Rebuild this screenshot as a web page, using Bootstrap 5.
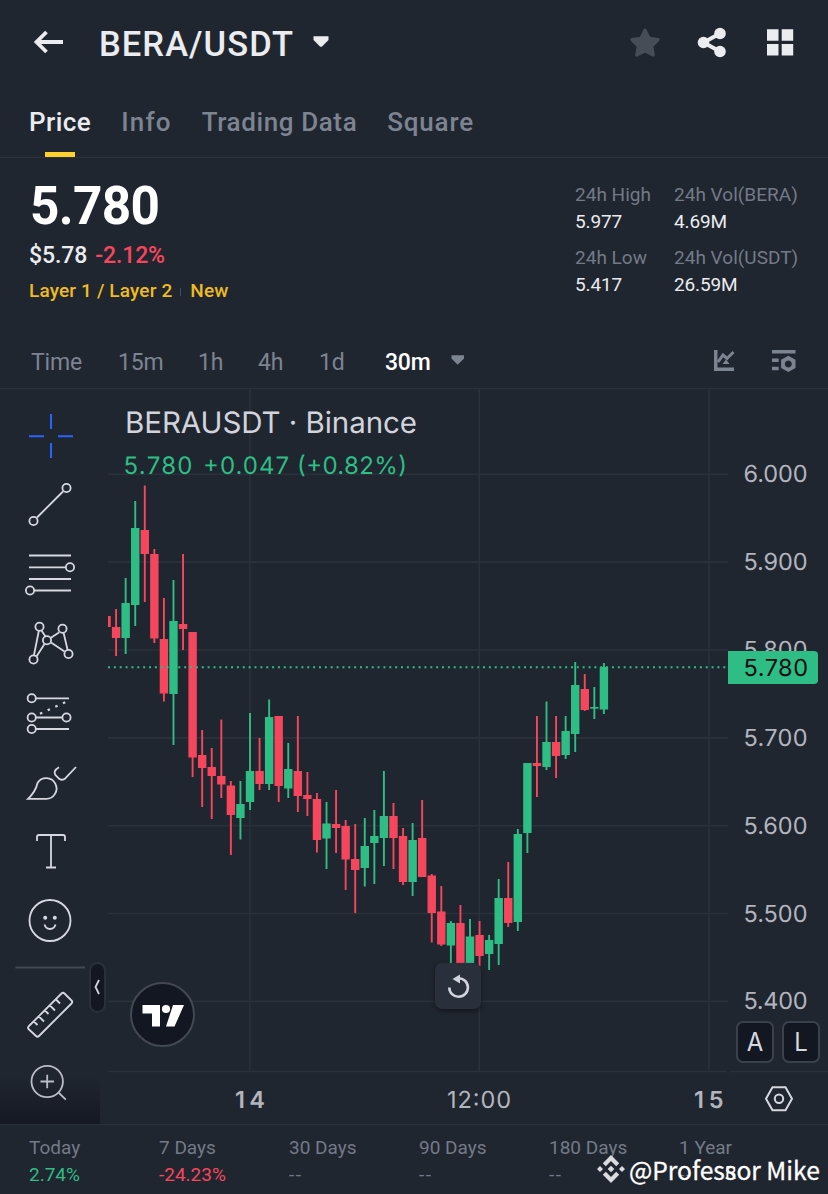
<!DOCTYPE html>
<html lang="en">
<head>
<meta charset="utf-8">
<meta name="viewport" content="width=device-width, initial-scale=1">
<title>BERA/USDT</title>
<link href="https://cdn.jsdelivr.net/npm/bootstrap@5.3.0/dist/css/bootstrap.min.css" rel="stylesheet">
<style>
:root{--bg:#20262f;--line:#2b313a;--fg:#eaecef;--dim:#7d8491;--up:#2ebd85;--down:#f6465d;--gold:#eebb22}
body{background:var(--bg);color:var(--fg);font-family:Roboto,sans-serif;width:828px;height:1194px;overflow:hidden}
svg{display:block;flex:none}
.topbar{height:84px}
.pair{font-size:34.5px;font-weight:500;line-height:40px;letter-spacing:1.05px;margin-left:35px;margin-top:3px}
.tabs{height:74px;border-bottom:1px solid var(--line);padding-left:29px;gap:30px}
.tabs a{position:relative;color:var(--dim);text-decoration:none;font-size:26px;font-weight:500;line-height:77px;letter-spacing:.45px}
.tabs a.on{color:var(--fg)}
.tabs .t2{letter-spacing:1.2px}
.tabs .t3{letter-spacing:.6px}
.tabs .t4{letter-spacing:.8px}
.tabs a.on::after{content:"";position:absolute;left:16px;bottom:0;width:30px;height:5px;background:#fcd12f}
.quote{height:176px;padding:0 29px}
.last{font-size:54px;font-weight:700;line-height:54px;letter-spacing:-.7px;color:#fff;margin:21px 0 0 1px;transform:scaleX(.95);transform-origin:left}
.sub{font-size:23px;font-weight:500;line-height:26px;margin-top:10px;letter-spacing:-.1px}
.tags{font-size:19px;font-weight:500;line-height:24px;color:var(--gold);margin-top:10px;letter-spacing:.15px}
.tags i{width:1px;height:8px;background:#474d57;margin:2px 9px 0 8px}
.stats{font-size:19px;line-height:27px;margin-top:23px}
.stats dt{font-weight:400;color:#737a87;line-height:27px;letter-spacing:.02px}
.stats dd{margin:0 0 9px;line-height:27px;color:var(--fg);letter-spacing:-.15px}
.stats .c1{width:99px}.stats .c2{width:125px;white-space:nowrap}
.frames{height:55px;border-bottom:1px solid var(--line);padding-left:31px;font-size:23px;color:var(--dim)}
.frames span{line-height:57px;white-space:nowrap;letter-spacing:-.2px}
.chart{height:736px;border-bottom:1px solid var(--line)}
.tools{width:100px;padding-top:12px;position:relative;height:735px}
.tools svg{fill:none;stroke:#d6d8e0;stroke-width:1.8;position:relative}
.fade-foot{position:absolute;left:0;bottom:0;width:100px;height:48px;background:linear-gradient(rgba(19,23,34,0),rgba(19,23,34,.9))}
.plot{position:relative;width:728px}
.plot text{font-family:Inter,sans-serif}
.handle{position:absolute;left:-11px;top:573px;width:17px;height:51px;border:2px solid #2a303b;border-radius:9px;background:#131722}
.tv{position:absolute;left:30px;top:593px;width:65px;height:65px;border:2px solid #434852;border-radius:50%;background:#131722}
.reset{position:absolute;left:335px;top:574px;width:46px;height:46px;border-radius:7px;background:#2a303b;box-shadow:0 2px 5px rgba(0,0,0,.4)}
.scalebtns{position:absolute;right:8px;top:632px;gap:8px}
.scalebtns button{width:38px;height:42px;padding:0;border:2px solid #3b414c;border-radius:7px;background:#131722;color:#d6d8e0;font:400 26px/36px Inter,sans-serif}
.scalebtns span{display:block;transform:scaleX(.92)}
.perf{height:69px;padding-left:29px;font-size:19px;position:relative}
.perf div.cell{width:130px;padding-top:9px;line-height:27px;color:#737a87;white-space:nowrap}
.dash{letter-spacing:1.4px}
.up{color:var(--up)}.down{color:var(--down);}
.credit{position:absolute;left:597px;top:26px;height:36px;color:#fff;font:400 24.6px/36px "Noto Sans CJK SC",sans-serif;-webkit-text-stroke:.3px #fff;white-space:nowrap}
.credit span{margin-top:-1px}
.stray{position:absolute;left:725px;top:38px;font-size:18px;line-height:20px;color:#fff}
</style>
</head>
<body>
<header class="topbar d-flex align-items-center">
  <svg width="64" height="84" viewBox="0 0 64 84" fill="none" stroke="#eaecef" stroke-width="3.8"><path d="M63 42H37M46.500 32L36.500 42l10 10"/></svg>
  <div class="pair">BERA/USDT</div>
  <svg width="20" height="84" viewBox="311 0 20 84" class="ms-auto"><path d="M313.500 36.300h15v3.700l-6.200 6.300q-1.300 1-2.600 0L313.500 40z" fill="#eaecef"/></svg>
  <svg width="497" height="84" viewBox="331 0 497 84">
    <path d="M645 30l4.200 8.200 9 1.400-6.400 6.600 1.500 8.900-8.300-4.100-8.300 4.100 1.500-8.900-6.400-6.600 9-1.400z" fill="#474d57" stroke="#474d57" stroke-width="3" stroke-linejoin="round"/>
    <g fill="#eaecef"><circle cx="703.500" cy="42.500" r="5.800"/><circle cx="720" cy="33.500" r="5.800"/><circle cx="720" cy="51.500" r="5.800"/><path d="M720 33.500L703.500 42.500 720 51.500" fill="none" stroke="#eaecef" stroke-width="4"/>
    <path d="M767 29.300h11.500v11.500H767zM781.700 29.300h11.500v11.500h-11.500zM767 44.100h11.500v11.500H767zM781.700 44.100h11.500v11.500h-11.500z"/></g>
  </svg>
</header>
<nav class="tabs d-flex">
  <a class="on" href="#">Price</a><a class="t2" href="#">Info</a><a class="t3" href="#">Trading Data</a><a class="t4" href="#">Square</a>
</nav>
<section class="quote d-flex justify-content-between">
  <div>
    <div class="last">5.780</div>
    <div class="sub"><span>$5.78</span><span class="down ms-2">-2.12%</span></div>
    <div class="tags d-flex align-items-center"><span>Layer 1 / Layer 2</span><i></i><span>New</span></div>
  </div>
  <div class="stats d-flex">
    <dl class="c1 mb-0"><dt>24h High</dt><dd>5.977</dd><dt>24h Low</dt><dd>5.417</dd></dl>
    <dl class="c2 mb-0"><dt>24h Vol(BERA)</dt><dd>4.69M</dd><dt>24h Vol(USDT)</dt><dd>26.59M</dd></dl>
  </div>
</section>
<div class="frames d-flex">
  <span style="width:87px">Time</span><span style="width:80px">15m</span><span style="width:60px">1h</span><span style="width:61px">4h</span><span style="width:66px">1d</span><span style="width:66px;color:#fff;font-weight:500">30m</span>
  <svg width="377" height="54" viewBox="451 334 377 54" fill="#7d8491">
    <path d="M451.500 355.300h12.500v3.200l-6.300 6.200-6.200-6.200z"/>
    <path d="M714 350h3.500v17.500H734v3.500h-20z"/><path d="M718 362l5-7 4 3.500 6.500-6.500" fill="none" stroke="#7d8491" stroke-width="3"/><path d="M726 359.500l3.500 4.500h-7z"/>
    <path d="M772 350h23.500v3.600H772zM772 358.500h6.700v3.600H772zM772 366.700h6.700v3.600H772z"/><path fill-rule="evenodd" d="M788.300 355.700l7.200 4.100v8.200l-7.200 4.100-7.200-4.100v-8.200zm0 4.700a3.500 3.500 0 1 0 .01 0z"/>
  </svg>
</div>
<main class="chart d-flex">
  <aside class="tools">
    <div class="fade-foot"></div>
    <svg width="100" height="69" viewBox="0 401 100 69"><path stroke="#2962ff" stroke-width="2" d="M51 414v15M51 443v15M29 436.300h15M58 436.300h15"/></svg>
    <svg width="100" height="69" viewBox="0 470 100 69"><path d="M37 517.500L63 491.500"/><circle cx="33.500" cy="521" r="4.100"/><circle cx="66.500" cy="488" r="4.100"/></svg>
    <svg width="100" height="69" viewBox="0 539 100 69"><path d="M29 555.500h42M29 567.300h37M29 579h42M34 590.500h37"/><circle cx="70" cy="567.300" r="4.100"/><circle cx="30" cy="590.500" r="4.100"/></svg>
    <svg width="100" height="69" viewBox="0 608 100 69"><path d="M38.800 631L34 655M41.500 630.500l4 6M50.500 638l8.500-5.500M63.500 632.500l4 17M51 642.500l13.500 9M36.500 656.500l8-12.500"/><circle cx="39.500" cy="626.700" r="4.100"/><circle cx="62.500" cy="628.700" r="4.100"/><circle cx="47" cy="640.300" r="4.100"/><circle cx="33.500" cy="659.500" r="4.100"/><circle cx="68.500" cy="654" r="4.100"/></svg>
    <svg width="100" height="69" viewBox="0 677 100 69"><path d="M36 698.300h33M36 717.500h26M36 729h33"/><path stroke-width="2.200" stroke-dasharray="2.500 5.900" d="M40 713.800L67 701.500"/><circle cx="31.700" cy="698.300" r="4.100"/><circle cx="31.700" cy="717.500" r="4.100"/><circle cx="66.500" cy="717.500" r="4.100"/><circle cx="31.700" cy="729" r="4.100"/></svg>
    <svg width="100" height="69" viewBox="0 746 100 69"><path d="M28 798.800H46A10.300 10.300 0 1 0 37.500 783C36 790 31 796 28 798.800zM59 767.200q-6.500 3.800-3.500 8l3 3q3.500 3 7 0L76 767"/></svg>
    <svg width="100" height="69" viewBox="0 815 100 69"><path d="M37 841v-4q0-2 2-2h24q2 0 2 2v4M51 835v32M46 867.500h10"/></svg>
    <svg width="100" height="69" viewBox="0 884 100 69"><circle cx="50" cy="920.500" r="20.500"/><path d="M44.500 924.500q1.300 4.500 5.500 4.500t5.500-4.500"/><g fill="#d6d8e0" stroke="none"><circle cx="45.200" cy="917.700" r="2"/><circle cx="54.800" cy="917.700" r="2"/></g></svg>
    <svg width="100" height="30" viewBox="0 953 100 30"><path stroke="#434852" stroke-width="2" d="M15.500 967.600H85"/></svg>
    <svg width="100" height="65" viewBox="0 983 100 65"><path stroke-linejoin="round" d="M28.500 1026.500L61.500 993.500q1.500-1.500 3 0l7 7q1.500 1.500 0 3L39 1036q-1.500 1.500-3 0l-7.500-7q-1-1.200 0-2.500M34 1021.500l3.500 3.500M39 1016.500l5 5M45 1010.500l3.500 3.500M50 1005.500l5 5M56 999.500l4 4"/></svg>
    <svg width="100" height="75" viewBox="0 1048 100 75" opacity=".85"><circle cx="47.200" cy="1081.500" r="15.700"/><path d="M40.500 1081.500h13.500M47.200 1074.700v13.500M58.500 1092.500l7.300 7.200"/></svg>
  </aside>
  <div class="plot">
    <svg width="728" height="735" viewBox="100 389 728 735" text-rendering="geometricPrecision">
      <g id="grid" stroke="#2b313a" stroke-width="1.6"></g>
      <text x="125" y="432.500" font-size="29.500" textLength="292" fill="#d1d4dc">BERAUSDT · Binance</text>
      <g id="candles"></g>
      <path d="M108 667.300H728" stroke="#2ebd85" stroke-width="2" stroke-dasharray="2 3.860"/>
      <g fill="#2ebd85" font-size="24"><text x="123.500" y="474" textLength="69">5.780</text><text x="203" y="474" textLength="86">+0.047</text><text x="297" y="474" textLength="110">(+0.82%)</text></g>
      <g id="scale" fill="#b2b5be" font-size="23.500"></g>
      <path d="M728 651h86q4 0 4 4v25q0 4-4 4h-86z" fill="#2ebd85"/>
      <text x="743.500" y="675.500" font-size="23.500" textLength="64.500" fill="#0c0e12">5.780</text>
      <g fill="#b2b5be" font-size="23.500"><text x="235" y="1107.500" font-weight="600" textLength="30">14</text><text x="447" y="1107.500" textLength="64">12:00</text><text x="694" y="1107.500" font-weight="600" textLength="29.500">15</text></g>
      <g fill="none" stroke="#d6d8e0" stroke-width="2"><path d="M772.500 1087.300h13l6.500 11.500-6.500 11.500h-13l-6.500-11.500z"/><circle cx="779" cy="1098.800" r="4.200"/></g>
    </svg>
    <div class="handle"><svg width="13" height="47" viewBox="0 0 13 47" fill="none" stroke="#d1d4dc" stroke-width="1.800"><path d="M8 16L4.500 23 8 30"/></svg></div>
    <div class="tv"><svg width="61" height="61" viewBox="132 984 61 61" fill="#fff"><path d="M142.500 1005h17.500v21.500h-8v-13h-9.500zM173 1005h11l-9.500 21.500H166z"/><circle cx="166" cy="1009" r="4.100"/></svg></div>
    <div class="reset"><svg width="46" height="46" viewBox="435 963 46 46"><path d="M449.300 987.500a9.300 9.300 0 1 0 9-9.300" fill="none" stroke="#d1d4dc" stroke-width="2.600"/><path d="M452.500 979l7.500-4.500v9z" fill="#d1d4dc"/></svg></div>
    <div class="scalebtns d-flex"><button><span>A</span></button><button><span>L</span></button></div>
  </div>
</main>
<footer class="perf d-flex">
  <div class="cell">Today<br><span class="up">2.74%</span></div>
  <div class="cell">7 Days<br><span class="down">-24.23%</span></div>
  <div class="cell">30 Days<br><span class="dash">--</span></div>
  <div class="cell">90 Days<br><span class="dash">--</span></div>
  <div class="cell">180 Days<br><span class="dash">--</span></div>
  <div class="cell">1 Year<br><span class="dash">--</span></div>
  <span class="stray">R</span>
  <div class="credit d-flex align-items-center"><svg width="28" height="28" viewBox="0 0 28 28" fill="#d9dbde" class="me-1"><path d="M14 0l8.200 8.200-3 3L14 6l-5.200 5.200-3-3zM14 28l-8.200-8.200 3-3L14 22l5.200-5.200 3 3zM3 11l3 3-3 3-3-3zM25 11l3 3-3 3-3-3zM14 10.700l3.300 3.300-3.300 3.300-3.300-3.300z"/></svg><span>@Professor Mike</span></div>
</footer>
<script src="https://cdn.jsdelivr.net/npm/bootstrap@5.3.0/dist/js/bootstrap.bundle.min.js"></script>
<script>
// direction, wick top, body top, body bottom, wick bottom
const bars=[
['d',616,616,627,627],['d',609,627,638,656],['u',578,603,638,654],['u',501,528,605,626],['d',485.5,530,554,602],
['d',549,554,638.5,643],['d',598,639,693.5,701.5],['u',580,621,694,745],['d',554,624,629,650],['d',632,632,757.5,777],
['d',730,755,768,807],['d',748,767,776,819],['d',719.5,776,784.5,798],['d',781,785.5,815,855],['u',781,804,818,839.5],
['u',713,771,802,810],['d',738,771,784,790],['u',699.5,717,784,790],['d',716,716,786,802],['u',743,769,788.5,798],
['d',716,771,796,812],['d',772,795,799,816],['d',793,799,840,852.5],['u',802,823.5,838.5,869],['d',790,824,828,853],
['d',820,826,859.5,890],['d',824,859,870,913],['u',818,846,868,886.5],['u',810,836,843,884],['u',771,816,838,866],
['d',803,816,838,869],['d',828,836,882,885],['u',823,840,882,896],['d',800,838,877,877],['d',874,875.5,913,942.5],
['d',886,911.5,944.5,946],['u',921,923,945.5,965],['d',905,923,963,965],['u',919,936.5,963,965],['d',921,935,956,966],
['u',935,940,954,970],['u',879,898,944,965],['d',862,898,923,927],['u',829,834,922,931],['u',763,763,833,853],
['d',716,763,766,797],['u',701.5,742,767,770],['d',716,742,756,778],['u',716,731,755,759],['u',662,685,734,752],
['d',674,689,710,711],['u',687,707,708.7,719],['u',663,667,709.5,714]];
const color={u:'#2ebd85',d:'#f6465d'};
document.getElementById('candles').innerHTML=bars.map(([k,h,t,b,l],i)=>{
  const x=250+(i-15)*9.565, left=Math.max(108,x-4.2);
  return `<g fill="${color[k]}">`+(x>108?`<rect x="${(x-.95).toFixed(2)}" y="${h}" width="1.9" height="${l-h}"/>`:'')
    +`<rect x="${left.toFixed(2)}" y="${t}" width="${(x+4.2-left).toFixed(2)}" height="${b-t}"/></g>`;
}).join('');
let grid='<path d="M108 1071.500H727M730 1071.500H828M250 389V1071M479.300 389V1071M709 389V1071"/>',scale='';
for(let i=0;i<7;i++){
  const y=474.3+i*87.85;
  grid+=`<path d="M108 ${y}H728"/>`;
  scale+=`<text x="743.500" y="${y+8}" textLength="64">${(6-i/10).toFixed(3)}</text>`;
}
document.getElementById('grid').innerHTML=grid;
document.getElementById('scale').innerHTML=scale;
</script>
</body>
</html>
